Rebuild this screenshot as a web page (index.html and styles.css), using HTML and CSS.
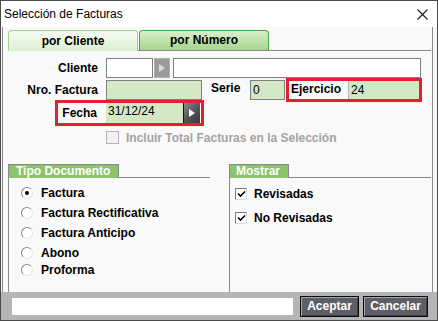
FILE: index.html
```html
<!DOCTYPE html>
<html lang="es">
<head>
<meta charset="utf-8">
<title>Selección de Facturas</title>
<link rel="stylesheet" href="styles.css">
</head>
<body>
<div class="window">
  <div class="titlebar">
    <span class="title">Selección de Facturas</span>
    <svg class="close" width="11" height="11" viewBox="0 0 11 11"><path d="M0.5 0.5 L10.5 10.5 M10.5 0.5 L0.5 10.5" stroke="#1a1a1a" stroke-width="1.1" fill="none"/></svg>
  </div>
  <div class="body">
    <div class="tabs">
      <div class="tab tab-sel">por Cliente</div>
      <div class="tab tab-other">por Número</div>
    </div>
    <div class="row row1">
      <div class="lbl">Cliente</div>
      <div class="field white small"></div>
      <div class="arrow gray"><svg width="8" height="10" viewBox="0 0 8 10"><path d="M1 1 L7 5 L1 9 Z" fill="#d8d8d8"/></svg></div>
      <div class="field white wide"></div>
    </div>
    <div class="row row2">
      <div class="lbl lbl-nro">Nro. Factura</div>
      <div class="field green nro"></div>
      <div class="lbl-serie">Serie</div>
      <div class="field green serie">0</div>
      <div class="redbox ejercicio">
        <div class="ej-lbl">Ejercicio</div>
        <div class="ej-val">24</div>
      </div>
    </div>
    <div class="row row3">
      <div class="redbox fecha">
        <div class="fe-lbl">Fecha</div>
        <div class="fe-val">31/12/24</div>
        <div class="arrow dark"><svg width="8" height="10" viewBox="0 0 8 10"><path d="M1 1 L7 5 L1 9 Z" fill="#ffffff"/></svg></div>
      </div>
    </div>
    <div class="row row4">
      <div class="chk disabled"></div>
      <span class="chk-text-dis">Incluir Total Facturas en la Selección</span>
    </div>
    <div class="groups">
      <div class="group">
        <div class="ghead"><div class="gtab gtab1">Tipo Documento</div></div>
        <div class="glist radios">
          <div class="opt"><span class="radio on"><span class="dot"></span></span>Factura</div>
          <div class="opt"><span class="radio"></span>Factura Rectificativa</div>
          <div class="opt"><span class="radio"></span>Factura Anticipo</div>
          <div class="opt"><span class="radio"></span>Abono</div>
          <div class="opt opt-last"><span class="radio"></span>Proforma</div>
        </div>
      </div>
      <div class="group">
        <div class="ghead"><div class="gtab gtab2">Mostrar</div></div>
        <div class="glist checks">
          <div class="copt"><span class="chk"><svg width="9" height="8" viewBox="0 0 9 8"><path d="M1 3.5 L3.5 6 L8 1.5" stroke="#000" stroke-width="1.6" fill="none"/></svg></span>Revisadas</div>
          <div class="copt"><span class="chk"><svg width="9" height="8" viewBox="0 0 9 8"><path d="M1 3.5 L3.5 6 L8 1.5" stroke="#000" stroke-width="1.6" fill="none"/></svg></span>No Revisadas</div>
        </div>
      </div>
    </div>
  </div>
  <div class="footer">
    <div class="status"></div>
    <div class="btn btn-ok">Aceptar</div>
    <div class="btn btn-cancel">Cancelar</div>
  </div>
</div>
</body>
</html>
```
FILE: styles.css
```css
* { box-sizing: border-box; }
html, body { margin: 0; padding: 0; }
body {
  font-family: "Liberation Sans", Arial, sans-serif;
  font-size: 12px;
  background: #ffffff;
}
.window {
  width: 438px;
  height: 321px;
  border: 1px solid #4a4a4a;
  display: flex;
  flex-direction: column;
  background: #f9f9f9;
}
.titlebar {
  height: 26px;
  background: #ffffff;
  display: flex;
  align-items: center;
  padding-left: 3px;
  padding-right: 9px;
  justify-content: space-between;
}
.title {
  font-size: 12px;
  color: #000;
  padding-bottom: 1px;
}
.close { display: block; margin-top: 1px; }
.body {
  height: 265px;
  margin-left: 1px;
  margin-right: 4px;
  border-left: 1px solid #8a8a8a;
  border-right: 1px solid #8a8a8a;
  padding: 3px 1px 0 5px;
  display: flex;
  flex-direction: column;
  font-weight: bold;
}
.tabs {
  display: flex;
  height: 21px;
  border-bottom: 1px solid #8a8a8a;
  flex-shrink: 0;
}
.tab {
  width: 130px;
  height: 21px;
  border-radius: 4px 4px 0 0;
  display: flex;
  align-items: center;
  justify-content: center;
  font-size: 12px;
  font-weight: bold;
  padding-bottom: 1px;
}
.tab-sel {
  background: linear-gradient(#f6fbf3, #ddefd3);
  border: 1px solid #9fd384;
  border-bottom: none;
  height: 21px;
  margin-bottom: -1px;
  position: relative;
}
.tab-other {
  margin-left: 1px;
  height: 20px;
  background: linear-gradient(#d9efcc, #a6d58d);
  border: 1px solid #44a83a;
  border-bottom: none;
}
.row { display: flex; flex-shrink: 0; }
.row1 { margin-top: 7px; height: 20px; align-items: center; }
.lbl {
  width: 90px;
  margin-right: 8px;
  text-align: right;
  line-height: 20px;
}
.field {
  height: 20px;
  border: 1px solid #808080;
  font-weight: normal;
  line-height: 18px;
  padding-left: 2px;
}
.white { background: #ffffff; }
.green { background: #d5e8c6; }
.small { width: 47px; }
.wide { width: 248px; margin-left: 3px; }
.arrow {
  width: 16px;
  height: 20px;
  display: flex;
  align-items: center;
  justify-content: center;
}
.arrow.gray {
  margin-left: 1px;
  background: #9b9b9b;
  border: 1px solid #b0b0b0;
}
.arrow.dark {
  width: 17px;
  border-left: 1px solid #111;
  background: linear-gradient(135deg, #8a8a90, #4c4c52 60%, #3a3a40);
}
.row2 { height: 22px; align-items: flex-start; }
.lbl-nro { margin-top: 2px; }
.nro { width: 96px; margin-top: 2px; }
.lbl-serie { margin-left: 9px; width: 39px; line-height: 20px; }
.serie { width: 35px; margin-top: 2px; }
.redbox { border: 3px solid #e2202e; display: flex; }
.ejercicio {
  margin-left: 1px;
  width: 136px;
  height: 24px;
  margin-bottom: -2px;
}
.ej-lbl {
  width: 60px;
  border-right: 1px solid #b4b4b4;
  padding-left: 2px;
  line-height: 16px;
}
.ej-val {
  flex: 1;
  background: #d5e8c6;
  font-weight: normal;
  line-height: 19px;
  padding-left: 2px;
}
.row3 { height: 26px; padding-left: 47px; }
.fecha { width: 149px; height: 26px; }
.fe-lbl {
  width: 48px;
  text-align: right;
  padding-right: 9px;
  line-height: 20px;
}
.fe-val {
  width: 77px;
  background: #d5e8c6;
  font-weight: normal;
  line-height: 17px;
  padding-left: 2px;
}
.row4 { margin-top: 5px; height: 13px; padding-left: 98px; align-items: center; }
.chk {
  width: 13px;
  height: 13px;
  background: #fff;
  border-top: 1px solid #7a7a7a;
  border-left: 1px solid #7a7a7a;
  border-right: 1px solid #dcdcdc;
  border-bottom: 1px solid #dcdcdc;
  display: inline-flex;
  align-items: center;
  justify-content: center;
  flex-shrink: 0;
}
.chk.disabled {
  background: #f2f2f2;
  border: 1px solid #b4b4b4;
}
.chk-text-dis { color: #a3a3a3; margin-left: 7px; }
.groups {
  margin-top: 20px;
  flex: 1;
  display: flex;
  gap: 19px;
}
.group {
  width: 202px;
  border-left: 1px solid #8a8a8a;
  display: flex;
  flex-direction: column;
}
.ghead {
  height: 14px;
  border-bottom: 1px solid #8a8a8a;
  display: flex;
  margin-left: -1px;
}
.gtab {
  height: 14px;
  background: #8cc46b;
  border: 1px solid #8a8a8a;
  border-bottom: none;
  color: #fff;
  font-weight: bold;
  font-size: 12px;
  line-height: 12px;
  padding-left: 7px;
}
.gtab1 { width: 111px; }
.gtab2 { width: 60px; padding-left: 6px; }
.radios { padding-top: 5px; }
.opt {
  height: 20px;
  display: flex;
  align-items: center;
  padding-left: 12px;
}
.opt-last { margin-top: -3px; }
.radio {
  width: 12px;
  height: 12px;
  border-radius: 50%;
  background: #fff;
  border: 1px solid;
  border-color: #8a8a8a #e4e4e4 #e4e4e4 #8a8a8a;
  margin-right: 8px;
  display: inline-flex;
  align-items: center;
  justify-content: center;
}
.dot { width: 4px; height: 4px; border-radius: 50%; background: #000; }
.checks { padding-top: 4px; }
.copt {
  height: 24px;
  display: flex;
  align-items: center;
  padding-left: 5px;
}
.copt .chk { width: 12px; height: 12px; margin-right: 7px; }
.footer {
  height: 28px;
  background: #b5b5b5;
  display: flex;
  align-items: center;
  padding-left: 11px;
  padding-top: 1px;
}
.status {
  width: 281px;
  height: 17px;
  background: #fff;
  margin-right: 7px;
}
.btn {
  height: 21px;
  border: 1px solid #0a0a0a;
  background: #5e5e66;
  box-shadow: inset 1px 1px 0 #a6a6ae, inset -1px -1px 0 #3e3e44;
  color: #fff;
  font-weight: bold;
  font-size: 12px;
  display: flex;
  align-items: center;
  justify-content: center;
  padding-bottom: 1px;
}
.btn-ok { width: 59px; }
.btn-cancel { width: 65px; margin-left: 4px; }
```
